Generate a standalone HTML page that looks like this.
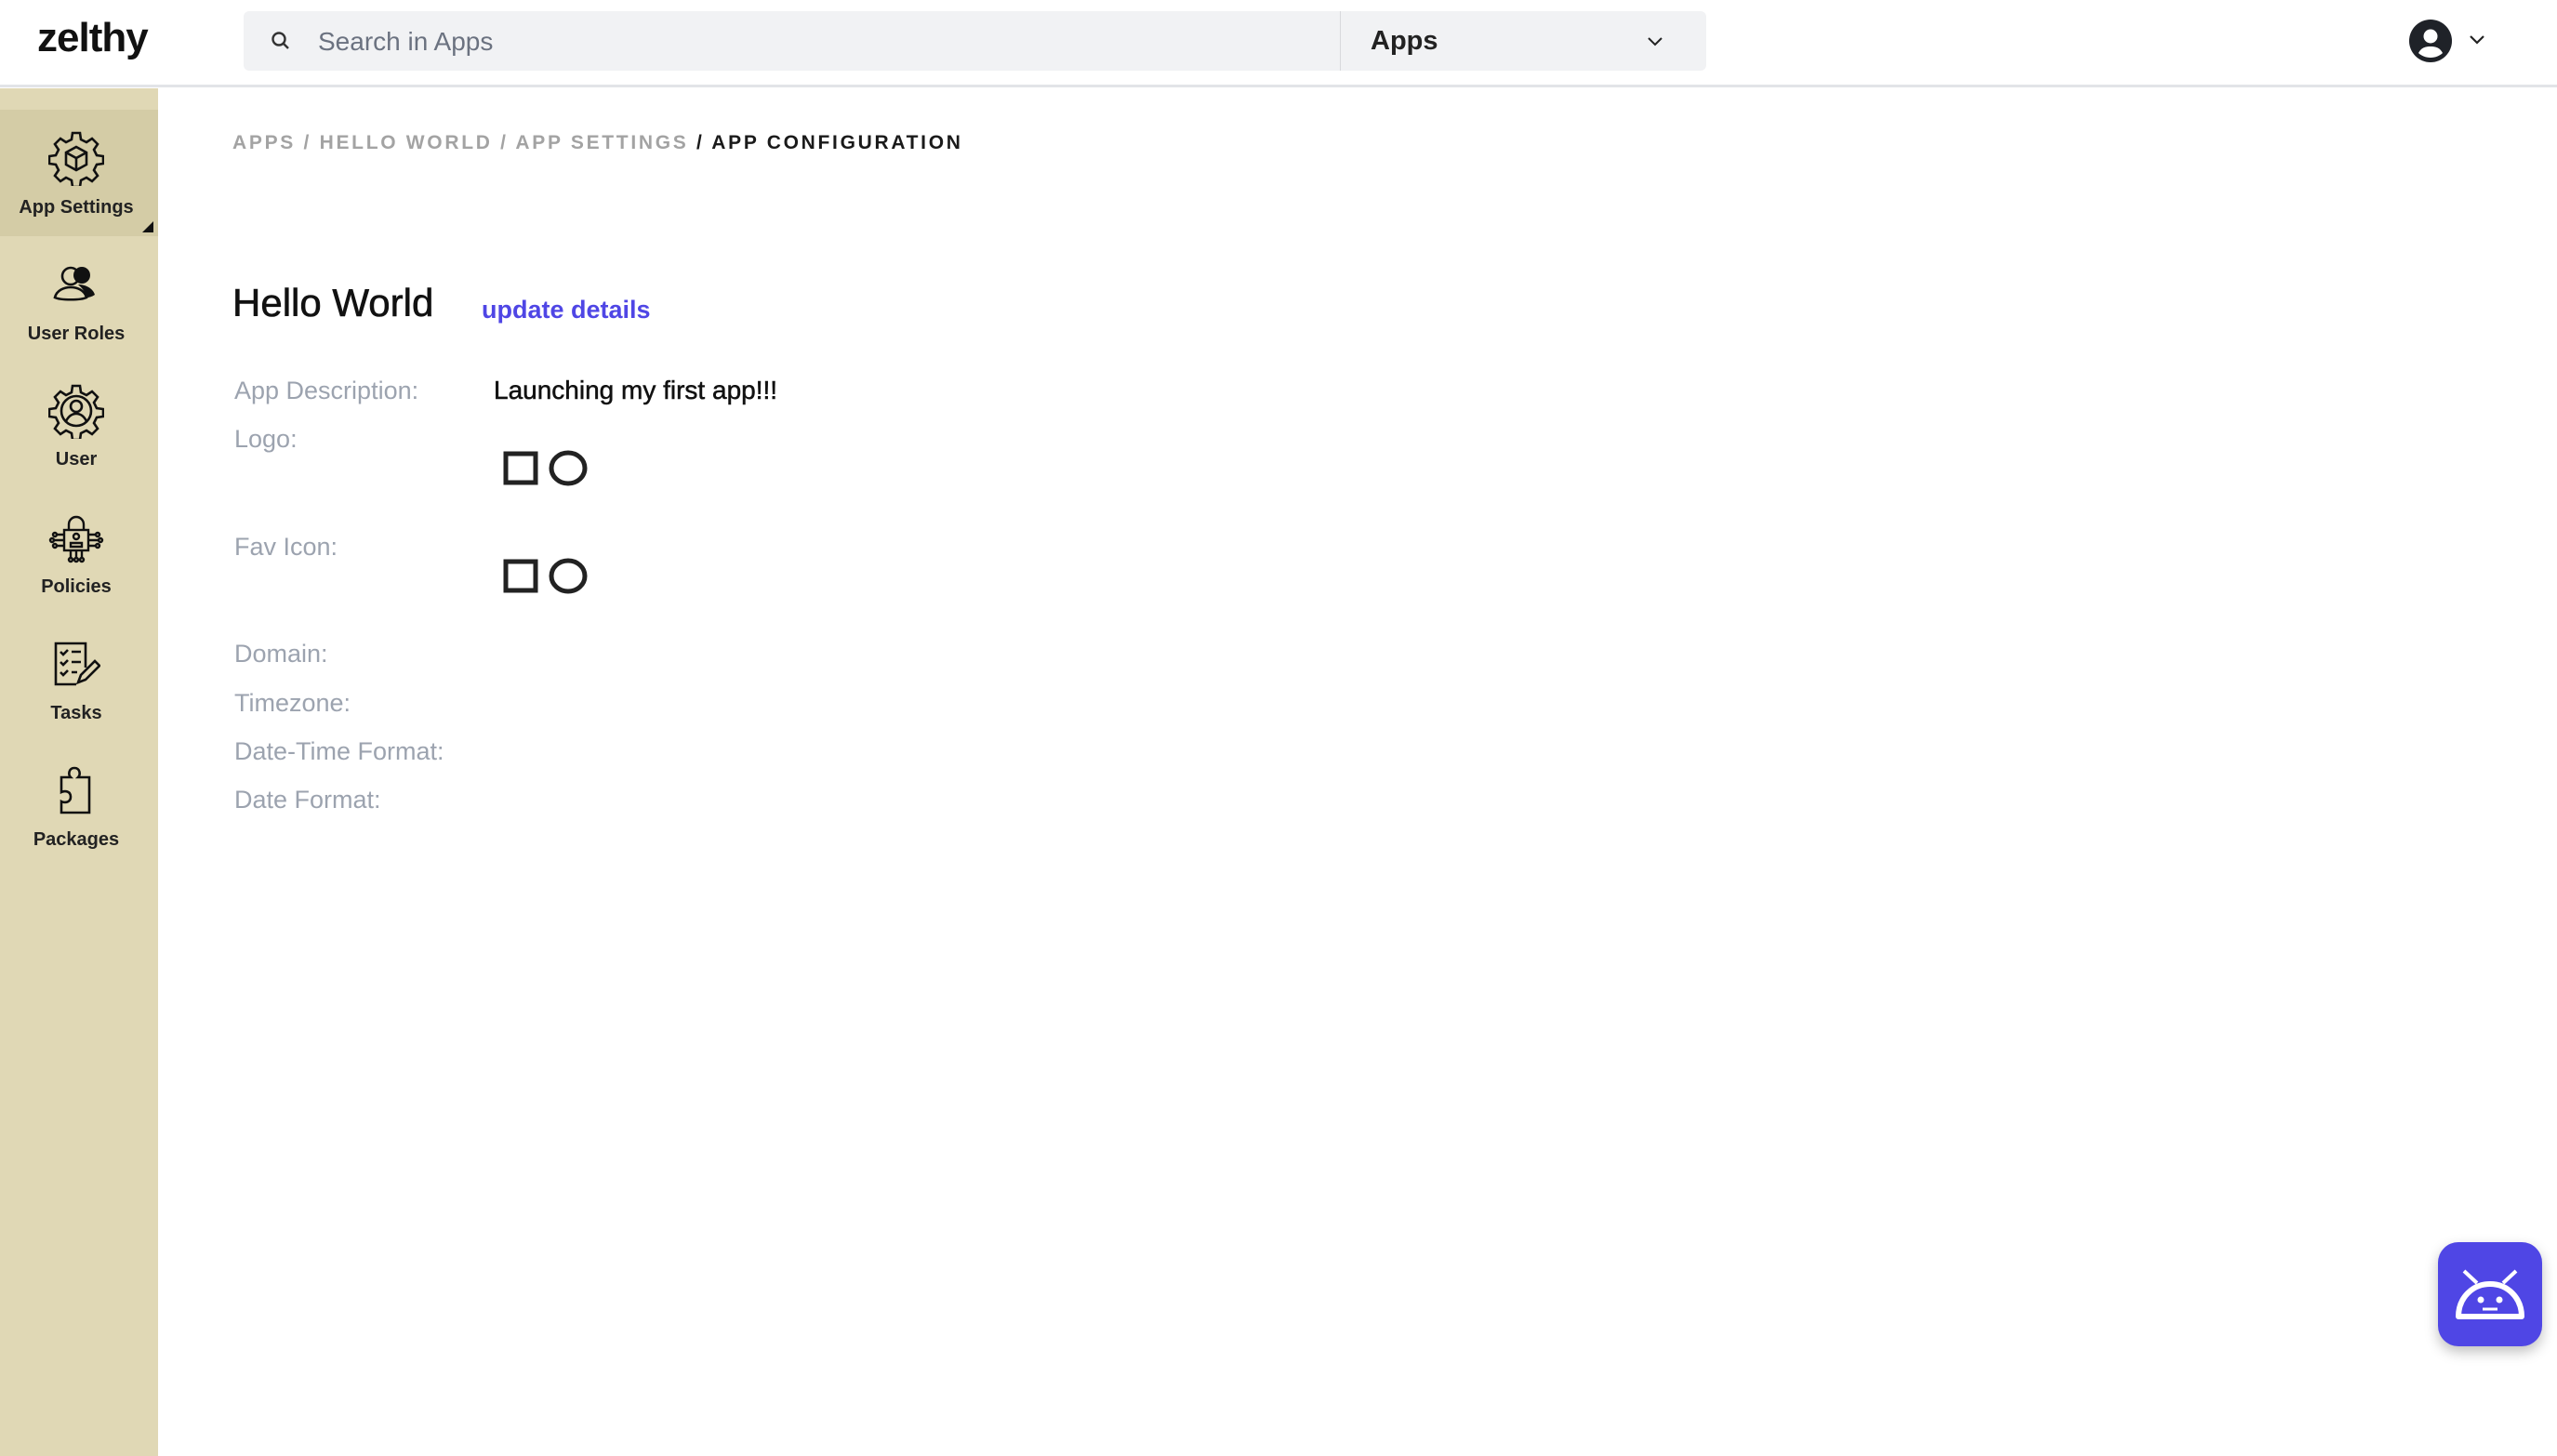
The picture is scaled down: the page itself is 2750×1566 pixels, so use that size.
<!DOCTYPE html>
<html><head><meta charset="utf-8"><style>
*{margin:0;padding:0;box-sizing:border-box}
body{width:2750px;height:1566px;background:#fff;font-family:"Liberation Sans",sans-serif;position:relative;overflow:hidden;color:#111}
.abs{position:absolute}
.hdr{left:0;top:0;width:2750px;height:94px;border-bottom:3px solid #e2e4e8;background:#fff}
.logo{left:40px;top:16px;font-size:44px;font-weight:bold;letter-spacing:-1px;color:#111}
.search{left:262px;top:12px;width:1573px;height:64px;background:#f1f2f4;border-radius:6px}
.sb{left:0;top:95px;width:170px;height:1471px;background:#e0d8b5}
.act{left:0;top:118px;width:170px;height:136px;background:#d4cca6}
.item{left:-3px;width:170px;text-align:center;font-size:20px;font-weight:bold;color:#222}
.lbl{left:252px;font-size:27px;color:#9ca3af}
svg{display:block}
</style></head><body>
<div class="abs hdr"></div>
<div class="abs logo">zelthy</div>
<div class="abs search"></div>
<svg class="abs" style="left:290px;top:32px" width="24" height="24" viewBox="0 0 24 24"><circle cx="10" cy="10" r="6.5" fill="none" stroke="#333" stroke-width="2.4"/><path d="M15 15l5 5" stroke="#333" stroke-width="2.4"/></svg>
<div class="abs" style="left:342px;top:29px;font-size:28px;color:#6b7280">Search in Apps</div>
<div class="abs" style="left:1441px;top:12px;width:1px;height:64px;background:#d8d9dc"></div>
<div class="abs" style="left:1474px;top:28px;font-size:29px;font-weight:bold;color:#222">Apps</div>
<svg class="abs" style="left:1770px;top:36px" width="20" height="16" viewBox="0 0 20 16"><path d="M3 5l7 7 7-7" fill="none" stroke="#222" stroke-width="2"/></svg>
<svg class="abs" style="left:2591px;top:21px" width="46" height="46" viewBox="0 0 46 46"><circle cx="23" cy="23" r="23" fill="#1f2228"/><circle cx="23" cy="18" r="7.5" fill="#fff"/><path d="M10 36c3-6 8-7 13-7s10 1 13 7c-3 3-8 5-13 5s-10-2-13-5z" fill="#fff"/></svg>
<svg class="abs" style="left:2654px;top:36px" width="20" height="14" viewBox="0 0 20 14"><path d="M3 3l7 7 7-7" fill="none" stroke="#222" stroke-width="2.2"/></svg>

<div class="abs sb"></div>
<div class="abs act"></div>
<div class="abs" style="left:153px;top:238px;width:0;height:0;border-left:12px solid transparent;border-bottom:12px solid #111"></div>

<svg class="abs" style="left:52px;top:140px" width="60" height="60" viewBox="0 0 60 60" fill="none" stroke="#111" stroke-width="2.6"><path d="M26 3h8l1 7 6 3 6-4 6 6-4 6 3 6 7 1v8l-7 1-3 6 4 6-6 6-6-4-6 3-1 7h-8l-1-7-6-3-6 4-6-6 4-6-3-6-7-1v-8l7-1 3-6-4-6 6-6 6 4 6-3z"/><path d="M30 18l11 6v13l-11 6-11-6V24z M19 24l11 6 11-6 M30 30v13"/></svg>
<div class="abs item" style="top:212px">App Settings</div>

<svg class="abs" style="left:56px;top:284px" width="52" height="42" viewBox="0 0 52 42"><circle cx="20" cy="13" r="9" fill="none" stroke="#111" stroke-width="2.6"/><path d="M3 36c2-8 10-11 17-11s15 3 17 11c-6 3-28 3-34 0z" fill="none" stroke="#111" stroke-width="2.6"/><circle cx="32" cy="12" r="9" fill="#111"/><path d="M28 22c8 0 16 4 18 11-3 2-6 3-9 3-1-7-6-11-9-14z" fill="#111"/></svg>
<div class="abs item" style="top:348px">User Roles</div>

<svg class="abs" style="left:52px;top:412px" width="60" height="60" viewBox="0 0 60 60" fill="none" stroke="#111" stroke-width="2.6"><path d="M26 3h8l1 7 6 3 6-4 6 6-4 6 3 6 7 1v8l-7 1-3 6 4 6-6 6-6-4-6 3-1 7h-8l-1-7-6-3-6 4-6-6 4-6-3-6-7-1v-8l7-1 3-6-4-6 6-6 6 4 6-3z"/><circle cx="30" cy="30" r="16"/><circle cx="30" cy="25" r="6"/><path d="M19 41c3-6 7-8 11-8s8 2 11 8"/></svg>
<div class="abs item" style="top:483px">User</div>

<svg class="abs" style="left:52px;top:550px" width="60" height="60" viewBox="0 0 60 60" fill="none" stroke="#111" stroke-width="2.4"><rect x="17" y="20" width="26" height="22"/><path d="M22 20v-6a8 8 0 0 1 16 0v6"/><circle cx="30" cy="27" r="3"/><path d="M24 38v-4h12v4z"/><path d="M17 25H9M17 31H5M17 37H9M43 25h8M43 31h12M43 37h8M24 42v8M30 42v8M36 42v8"/><circle cx="7" cy="25" r="2"/><circle cx="4" cy="31" r="2"/><circle cx="7" cy="37" r="2"/><circle cx="53" cy="25" r="2"/><circle cx="56" cy="31" r="2"/><circle cx="53" cy="37" r="2"/><circle cx="24" cy="52" r="2"/><circle cx="30" cy="52" r="2"/><circle cx="36" cy="52" r="2"/></svg>
<div class="abs item" style="top:620px">Policies</div>

<svg class="abs" style="left:56px;top:688px" width="52" height="52" viewBox="0 0 52 52" fill="none" stroke="#111" stroke-width="2.6"><path d="M36 30V4H4v44h22"/><path d="M9 13l3 3 5-5M9 24l3 3 5-5M9 35l3 3 5-5M21 13h10M21 24h10M21 35h6"/><path d="M28 46l3-8 15-15 5 5-15 15z"/></svg>
<div class="abs item" style="top:756px">Tasks</div>

<svg class="abs" style="left:58px;top:824px" width="48" height="52" viewBox="0 0 48 52" fill="none" stroke="#111" stroke-width="2.6"><path d="M8 12h10c-3-3-2-10 4-10s7 7 4 10h12v38H8V38c4 2 10 1 10-5s-6-7-10-5z"/></svg>
<div class="abs item" style="top:892px">Packages</div>

<div class="abs" style="left:250px;top:142px;font-size:21px;font-weight:bold;letter-spacing:2.7px;color:#a3a3a3;white-space:nowrap">APPS / HELLO WORLD / APP SETTINGS <span style="color:#1a1a1a">/ APP CONFIGURATION</span></div>

<div class="abs" style="left:250px;top:302px;font-size:42px;color:#111;-webkit-text-stroke:0.6px #111">Hello World</div>
<div class="abs" style="left:518px;top:318px;font-size:27px;font-weight:bold;color:#4f46e5">update details</div>

<div class="abs lbl" style="top:405px">App Description:</div>
<div class="abs" style="left:531px;top:404px;font-size:28px;color:#111;-webkit-text-stroke:0.5px #111">Launching my first app!!!</div>
<div class="abs lbl" style="top:457px">Logo:</div>
<div class="abs lbl" style="top:573px">Fav Icon:</div>
<div class="abs lbl" style="top:688px">Domain:</div>
<div class="abs lbl" style="top:741px">Timezone:</div>
<div class="abs lbl" style="top:793px">Date-Time Format:</div>
<div class="abs lbl" style="top:845px">Date Format:</div>

<svg class="abs" style="left:540px;top:483px" width="94" height="42" viewBox="0 0 94 42"><rect x="4" y="5" width="32" height="31" fill="none" stroke="#222" stroke-width="5"/><ellipse cx="71" cy="20.5" rx="18" ry="16.5" fill="none" stroke="#222" stroke-width="5"/></svg>
<svg class="abs" style="left:540px;top:599px" width="94" height="42" viewBox="0 0 94 42"><rect x="4" y="5" width="32" height="31" fill="none" stroke="#222" stroke-width="5"/><ellipse cx="71" cy="20.5" rx="18" ry="16.5" fill="none" stroke="#222" stroke-width="5"/></svg>

<div class="abs" style="left:2622px;top:1336px;width:112px;height:112px;background:#4f46e5;border-radius:22px;box-shadow:0 6px 14px rgba(0,0,0,.25)"></div>
<svg class="abs" style="left:2622px;top:1336px" width="112" height="112" viewBox="0 0 112 112"><path d="M28 31l14 13M84 31L70 44" stroke="#fff" stroke-width="4"/><path d="M22 80c0-20 15-35 34-35s34 15 34 35z" fill="none" stroke="#fff" stroke-width="6" stroke-linejoin="round"/><circle cx="46" cy="62" r="3.5" fill="#fff"/><circle cx="66" cy="62" r="3.5" fill="#fff"/><path d="M48 72h16" stroke="#fff" stroke-width="3"/></svg>
</body></html>
